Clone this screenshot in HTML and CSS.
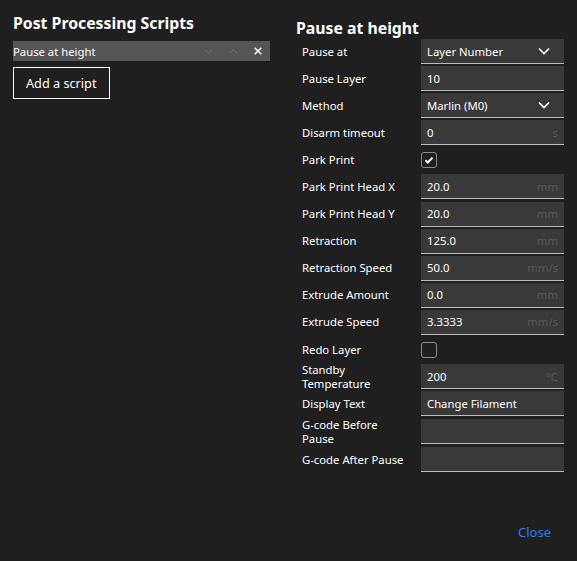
FILE: index.html
```html
<!DOCTYPE html>
<html lang="en">
<head>
    <meta charset="UTF-8">
    <title>Post Processing Scripts</title>
    <link rel="stylesheet" href="styles.css">
</head>
<body>
    <div class="dialog">
        <div class="scripts">
            <h2 class="title">Post Processing Scripts</h2>
            <div class="script-item">
                <span class="script-name">Pause at height</span>
                <svg class="item-btn dim" viewBox="0 0 12 12"><path d="M2 4l4 4 4-4" /></svg>
                <svg class="item-btn dim" viewBox="0 0 12 12"><path d="M2 8l4-4 4 4" /></svg>
                <svg class="item-btn close-x" viewBox="0 0 12 12"><path d="M2 2l8 8M10 2l-8 8" /></svg>
            </div>
            <button class="add-btn">Add a script</button>
        </div>

        <div class="settings">
            <h2 class="title settings-title">Pause at height</h2>
            <div class="rows">
                <div class="row">
                    <span class="label">Pause at</span>
                    <div class="field combo">Layer Number
                        <svg class="chevron" viewBox="0 0 12 8"><path d="M1 1.5l5 5 5-5" /></svg>
                    </div>
                </div>
                <div class="row">
                    <span class="label">Pause Layer</span>
                    <div class="field">10</div>
                </div>
                <div class="row">
                    <span class="label">Method</span>
                    <div class="field combo">Marlin (M0)
                        <svg class="chevron" viewBox="0 0 12 8"><path d="M1 1.5l5 5 5-5" /></svg>
                    </div>
                </div>
                <div class="row">
                    <span class="label">Disarm timeout</span>
                    <div class="field">0<span class="unit">s</span></div>
                </div>
                <div class="row">
                    <span class="label">Park Print</span>
                    <div class="check checked">
                        <svg viewBox="0 0 10 10"><path d="M1.5 5.2l2.3 2.3 4.7-4.9" /></svg>
                    </div>
                </div>
                <div class="row">
                    <span class="label">Park Print Head X</span>
                    <div class="field">20.0<span class="unit">mm</span></div>
                </div>
                <div class="row">
                    <span class="label">Park Print Head Y</span>
                    <div class="field">20.0<span class="unit">mm</span></div>
                </div>
                <div class="row">
                    <span class="label">Retraction</span>
                    <div class="field">125.0<span class="unit">mm</span></div>
                </div>
                <div class="row">
                    <span class="label">Retraction Speed</span>
                    <div class="field">50.0<span class="unit">mm/s</span></div>
                </div>
                <div class="row">
                    <span class="label">Extrude Amount</span>
                    <div class="field">0.0<span class="unit">mm</span></div>
                </div>
                <div class="row">
                    <span class="label">Extrude Speed</span>
                    <div class="field">3.3333<span class="unit">mm/s</span></div>
                </div>
                <div class="row">
                    <span class="label">Redo Layer</span>
                    <div class="check"></div>
                </div>
                <div class="row">
                    <span class="label narrow">Standby Temperature</span>
                    <div class="field">200<span class="unit">°C</span></div>
                </div>
                <div class="row">
                    <span class="label">Display Text</span>
                    <div class="field">Change Filament</div>
                </div>
                <div class="row tall">
                    <span class="label narrow">G-code Before Pause</span>
                    <div class="field"></div>
                </div>
                <div class="row">
                    <span class="label">G-code After Pause</span>
                    <div class="field"></div>
                </div>
            </div>
        </div>
    </div>
    <div class="footer">
        <a class="close" href="#">Close</a>
    </div>
</body>
</html>
```

FILE: styles.css
```css
:root {
    --bg: #1f1f1f;
    --field: #393939;
    --line: #bdbdbd;
    --text: #ffffff;
    --muted: #5a5a5a;
    --blue: #2a7aff;
}

body {
    margin: 0;
    width: 577px;
    height: 561px;
    background: var(--bg);
    color: var(--text);
    font-family: 'Noto Sans', sans-serif;
    font-size: 11.3px;
    overflow: hidden;
}

.dialog {
    display: flex;
    height: 523px;
}

.title {
    margin: 0;
    font-size: 15.8px;
    font-weight: bold;
    line-height: 20px;
}

.scripts {
    width: 257px;
    margin-left: 13px;
    padding-top: 13px;
}

.script-item {
    display: flex;
    align-items: center;
    height: 20px;
    margin-top: 8px;
    background: #555555;
}

.script-name {
    flex: 1;
}

.item-btn {
    width: 11px;
    height: 11px;
    margin-right: 14px;
    fill: none;
    stroke: #6e6e6e;
    stroke-width: 1.2;
}

.item-btn.close-x {
    width: 10px;
    height: 10px;
    margin-right: 7px;
    stroke: #ffffff;
    stroke-width: 1.8;
}

.add-btn {
    margin-top: 6px;
    height: 32px;
    padding: 0 12px;
    border: 1px solid #ffffff;
    background: transparent;
    color: var(--text);
    font-family: inherit;
    font-size: 12.7px;
}

.settings {
    margin-left: 26px;
    padding-top: 18px;
}

.settings-title {
    margin-bottom: 1px;
}

.rows {
    display: flex;
    flex-direction: column;
    gap: 2.1px;
    padding-left: 6px;
}

.row {
    display: flex;
    align-items: center;
    height: 25px;
}

.row.tall {
    height: 27px;
}

.label {
    width: 119px;
    line-height: 14px;
}

.label.narrow {
    width: 90px;
}

.row .narrow + .field {
    margin-left: 29px;
}

.field {
    display: flex;
    align-items: center;
    box-sizing: border-box;
    width: 143px;
    height: 25px;
    padding: 0 6px;
    background: var(--field);
    border-bottom: 1px solid var(--line);
}

.unit {
    margin-left: auto;
    color: var(--muted);
}

.chevron {
    width: 12px;
    height: 8px;
    margin-left: auto;
    margin-right: 8px;
    fill: none;
    stroke: #ffffff;
    stroke-width: 1.6;
}

.check {
    box-sizing: border-box;
    width: 16px;
    height: 16px;
    border: 1px solid #8c8c8c;
    border-radius: 3px;
    display: flex;
    align-items: center;
    justify-content: center;
}

.check svg {
    width: 10px;
    height: 10px;
    fill: none;
    stroke: #ffffff;
    stroke-width: 2;
}

.footer {
    display: flex;
    justify-content: flex-end;
    padding-right: 26px;
}

.close {
    color: var(--blue);
    text-decoration: none;
    font-size: 13px;
}
```
